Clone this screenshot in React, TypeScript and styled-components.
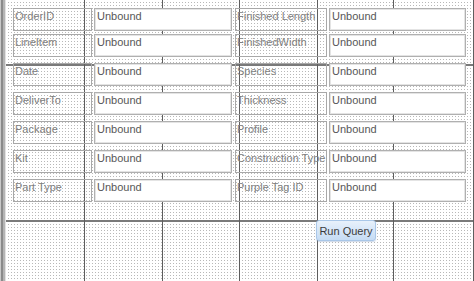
import * as React from "react";
import styled, { createGlobalStyle } from "styled-components";

const GlobalStyle = createGlobalStyle`
  html, body {
    margin: 0;
    padding: 0;
    overflow: hidden;
    background: #fff;
  }
`;

const Designer = styled.div`
  display: flex;
  width: 474px;
  height: 281px;
  font-family: "Liberation Sans", Arial, sans-serif;
  font-size: 11px;
`;

/* the grey splitter strip on the left edge */
const Strip = styled.div`
  width: 6px;
  flex: none;
  background: linear-gradient(
    90deg,
    #c9c9c9 0 1px,
    #8a8a8a 1px 3px,
    #b4b4b4 3px 5px,
    #e2e2e2 5px 6px
  );
`;

// design grid: major lines over a 3px dot pattern
const line = (x: number) =>
  `linear-gradient(90deg, transparent ${x}px, #5e5e5e ${x}px, #5e5e5e ${x + 1}px, transparent ${x + 1}px)`;
const hline = (y: number) =>
  `linear-gradient(180deg, transparent ${y}px, #7a7a7a ${y}px, #7a7a7a ${y + 2}px, transparent ${y + 2}px)`;

const Surface = styled.section`
  flex: 1;
  display: flex;
  flex-direction: column;
  padding: 8px 0 0 7px;
  background-color: #fff;
  background-image: ${[78, 156, 233, 311, 387, 467].map(line).join(", ")},
    ${hline(64)}, ${hline(220)},
    linear-gradient(90deg, #fff 2px, transparent 2px),
    linear-gradient(180deg, #fff 2px, #b8b8b8 2px);
  background-size: ${"100% 100%, ".repeat(8)}3px 3px, 3px 3px;
  background-repeat: ${"no-repeat, ".repeat(8)}repeat, repeat;
`;

const Rows = styled.div`
  display: flex;
  flex-direction: column;
  gap: 6px;
`;

const Row = styled.div<{ $tight?: boolean }>`
  display: flex;
  gap: 3px;
  height: 23px;
  margin-bottom: ${(p) => (p.$tight ? "-3px" : "0")};
`;

const Pair = styled.div`
  display: flex;
  gap: 2px;
`;

const Caption = styled.div<{ $w: number }>`
  width: ${(p) => p.$w}px;
  box-sizing: border-box;
  border: 1px solid #a8a8a8;
  padding: 1px 0 0 1px;
  line-height: 13px;
  color: #808080;
  white-space: nowrap;
  overflow: hidden;
`;

const TextBox = styled.div<{ $w: number }>`
  width: ${(p) => p.$w}px;
  box-sizing: border-box;
  border: 1px solid #b0b0b0;
  box-shadow: inset 0 0 0 1px #e4e4e4;
  background: #fff;
  padding: 1px 0 0 2px;
  line-height: 13px;
  color: #575757;
`;

const Footer = styled.div`
  display: flex;
  margin-top: 18px;
  padding-left: 303px;
`;

const RunButton = styled.button`
  width: 60px;
  height: 21px;
  padding: 0;
  border: 1px solid #a9c7e8;
  border-radius: 3px;
  background: linear-gradient(180deg, #e8f1fb 0%, #d6e6f8 50%, #c6dcf4 100%);
  box-shadow: 0 1px 1px rgba(120, 150, 190, 0.35);
  font-family: "Liberation Sans", Arial, sans-serif;
  font-size: 11px;
  color: #3b3b3b;
`;

const fields: [string, string][] = [
  ["OrderID", "Finished Length"],
  ["LineItem", "FinishedWidth"],
  ["Date", "Species"],
  ["DeliverTo", "Thickness"],
  ["Package", "Profile"],
  ["Kit", "Construction Type"],
  ["Part Type", "Purple Tag ID"],
];

export default function App() {
  return (
    <>
      <GlobalStyle />
      <Designer>
        <Strip />
        <Surface>
          <Rows>
            {fields.map(([left, right], i) => (
              <Row key={left} $tight={i === 0}>
                <Pair>
                  <Caption $w={79}>{left}</Caption>
                  <TextBox $w={138}>Unbound</TextBox>
                </Pair>
                <Pair>
                  <Caption $w={92}>{right}</Caption>
                  <TextBox $w={137}>Unbound</TextBox>
                </Pair>
              </Row>
            ))}
          </Rows>
          <Footer>
            <RunButton>Run Query</RunButton>
          </Footer>
        </Surface>
      </Designer>
    </>
  );
}
